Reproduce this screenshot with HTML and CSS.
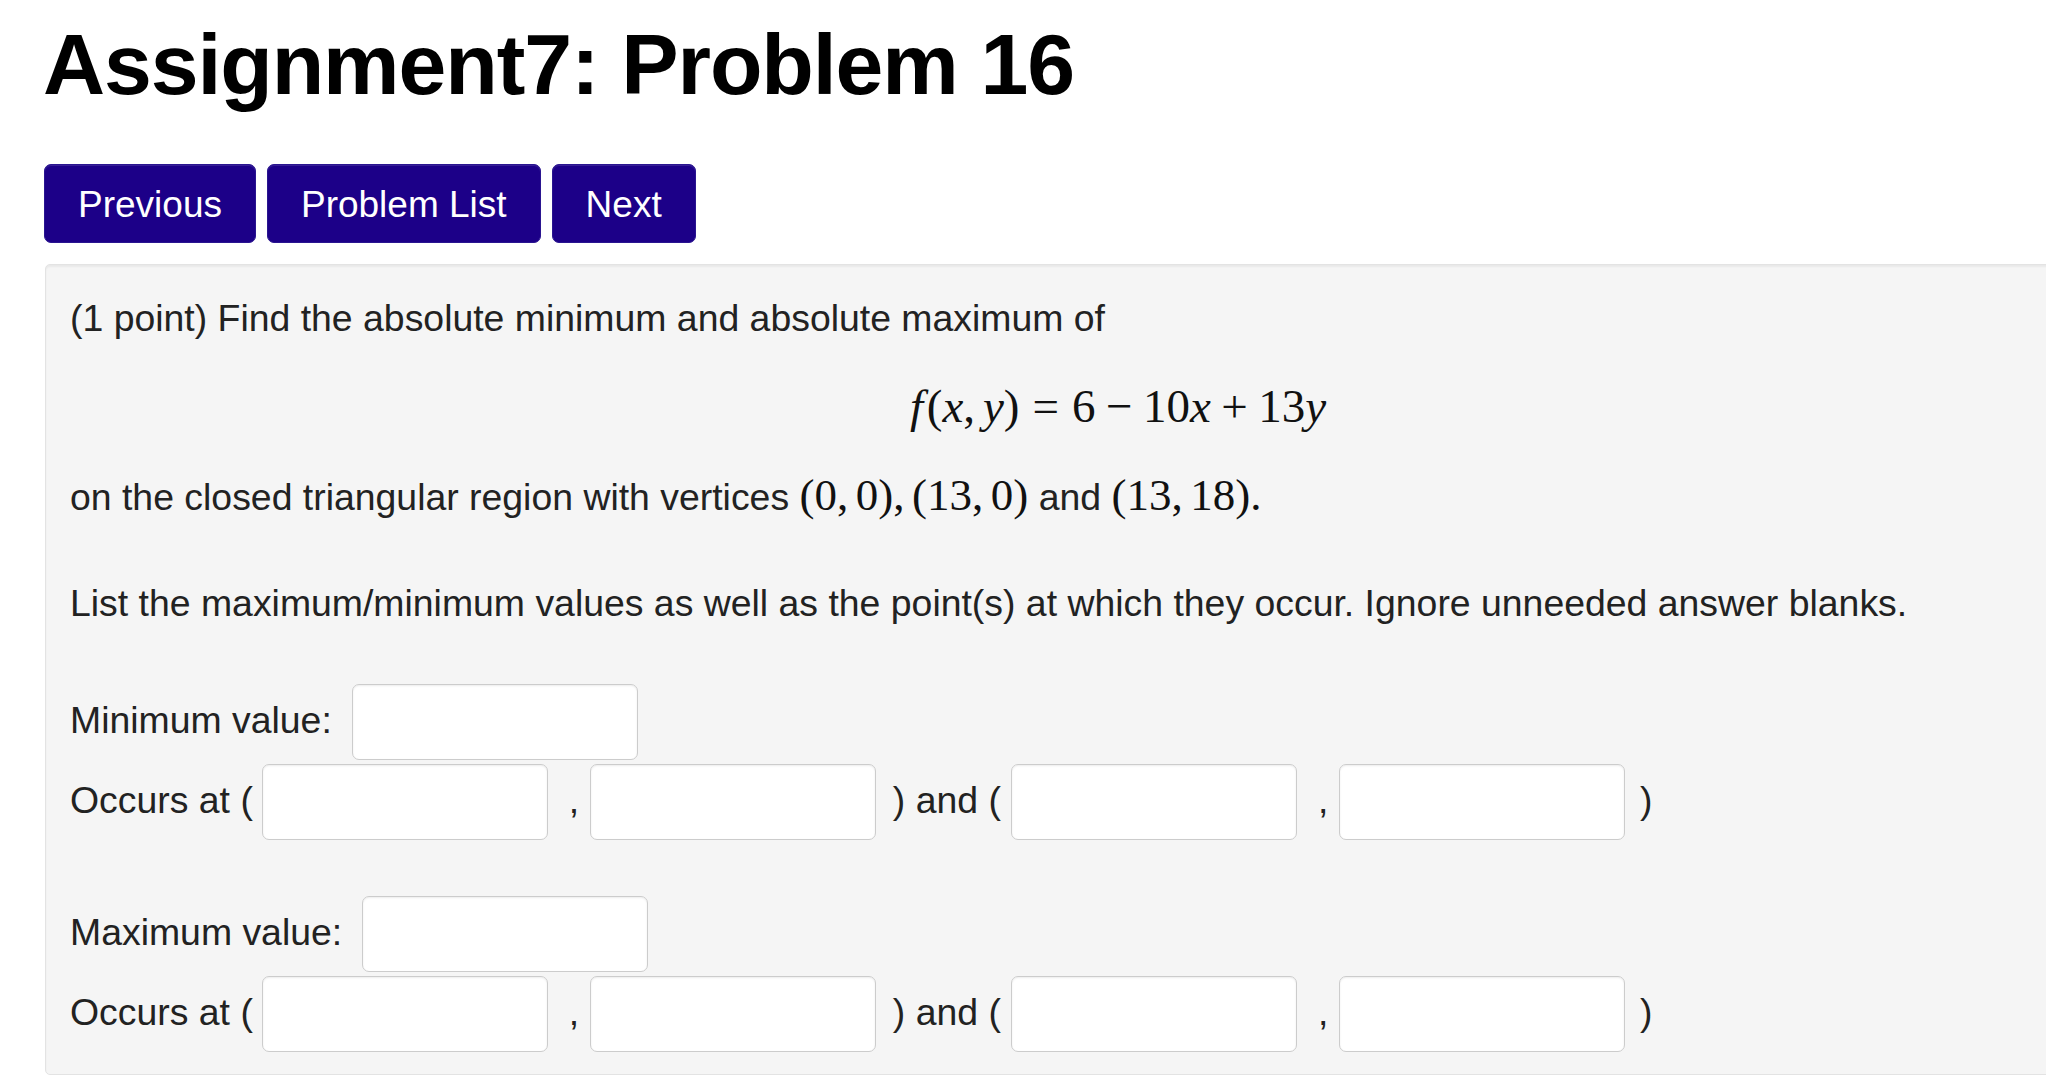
FILE: index.html
```html
<!DOCTYPE html>
<html>
<head>
<meta charset="utf-8">
<title>Assignment7: Problem 16</title>
<link rel="stylesheet" href="styles.css">
</head>
<body>
<div class="page">
  <h1 class="title">Assignment7: Problem 16</h1>
  <div class="nav">
    <a class="btn">Previous</a>
    <a class="btn">Problem List</a>
    <a class="btn">Next</a>
  </div>
  <div class="well">
    <p class="line l1">(1 point) Find the absolute minimum and absolute maximum of</p>
    <div class="formula"><span class="mi mi-f">f</span>(<span class="mi">x</span>,<span class="thin"></span><span class="mi">y</span>)<span class="rel">=</span>6<span class="bin">−</span>10<span class="mi">x</span><span class="bin">+</span>13<span class="mi">y</span></div>
    <p class="line l3">on the closed triangular region with vertices <span class="m">(0,<span class="thin"></span>0),<span class="thin"></span>(13,<span class="thin"></span>0)</span> and <span class="m">(13,<span class="thin"></span>18).</span></p>
    <p class="line l4">List the maximum/minimum values as well as the point(s) at which they occur. Ignore unneeded answer blanks.</p>

    <div class="row row-val">
      <span class="txt">Minimum value:</span>
      <input class="ans ans-val" type="text">
    </div>
    <div class="row row-at">
      <span class="txt">Occurs at (</span>
      <input class="ans ans-first" type="text">
      <span class="txt comma">,</span>
      <input class="ans" type="text">
      <span class="txt and">) and (</span>
      <input class="ans" type="text">
      <span class="txt comma">,</span>
      <input class="ans" type="text">
      <span class="txt close">)</span>
    </div>

    <div class="row row-val row-gap">
      <span class="txt">Maximum value:</span>
      <input class="ans ans-val" type="text">
    </div>
    <div class="row row-at">
      <span class="txt">Occurs at (</span>
      <input class="ans ans-first" type="text">
      <span class="txt comma">,</span>
      <input class="ans" type="text">
      <span class="txt and">) and (</span>
      <input class="ans" type="text">
      <span class="txt comma">,</span>
      <input class="ans" type="text">
      <span class="txt close">)</span>
    </div>
  </div>
</div>
</body>
</html>
```
FILE: styles.css
```css
html, body {
  margin: 0;
  padding: 0;
  background: #ffffff;
  overflow: hidden;
}

body {
  font-family: "Liberation Sans", Arial, Helvetica, sans-serif;
  color: #222222;
}

.page {
  padding: 14px 0 0 44px;
}

.title {
  margin: 0;
  font-size: 86px;
  line-height: 100px;
  font-weight: bold;
  letter-spacing: -1.1px;
  color: #000000;
  margin-left: -1px;
}

.nav {
  display: flex;
  gap: 11px;
  margin-top: 50px;
}

.btn {
  display: block;
  height: 79px;
  line-height: 79px;
  box-sizing: border-box;
  padding: 0 33px;
  background: #1c0088;
  border: 1px solid #2a1590;
  border-radius: 7px;
  color: #ffffff;
  font-size: 37px;
  text-decoration: none;
  box-shadow: inset 0 1px 0 rgba(255, 255, 255, 0.12);
}

.well {
  width: 2146px;
  box-sizing: border-box;
  margin-top: 21px;
  margin-left: 1px;
  padding: 28px 24px 22px 24px;
  background: #f5f5f5;
  border: 1px solid #e3e3e3;
  border-radius: 5px;
  box-shadow: inset 0 2px 2px rgba(0, 0, 0, 0.05);
  font-size: 37.4px;
  line-height: 50px;
}

.line {
  margin: 0;
}

.formula {
  margin-top: 33px;
  text-align: center;
  font-family: "Liberation Serif", "Times New Roman", serif;
  font-size: 47px;
  line-height: 60px;
  color: #111111;
}

.mi {
  font-style: italic;
}

.mi-f {
  margin-right: 0.08em;
}

.thin {
  display: inline-block;
  width: 0.167em;
}

.rel {
  margin: 0 0.278em;
}

.bin {
  margin: 0 0.222em;
}

.l3 {
  margin-top: 36px;
}

.m {
  font-family: "Liberation Serif", "Times New Roman", serif;
  font-size: 45px;
  line-height: 0;
  color: #111111;
}

.l4 {
  margin-top: 56px;
}

.row {
  display: flex;
  align-items: center;
  height: 76px;
}

.row-val {
  margin-top: 56px;
}

.row-at {
  margin-top: 4px;
}

.txt {
  display: block;
  padding-bottom: 5px;
  white-space: pre;
}

.ans {
  display: block;
  width: 286px;
  height: 76px;
  box-sizing: border-box;
  margin: 0;
  padding: 4px 10px;
  background: #ffffff;
  border: 1px solid #cccccc;
  border-radius: 7px;
  box-shadow: inset 0 1px 2px rgba(0, 0, 0, 0.08);
  font-family: "Liberation Sans", Arial, sans-serif;
  font-size: 30px;
}

.ans-val {
  margin-left: 20px;
}

.ans-first {
  margin-left: 9px;
}

.comma {
  width: 42px;
  box-sizing: border-box;
  padding-left: 21px;
}

.and {
  margin-left: 17px;
  margin-right: 10px;
}

.close {
  margin-left: 15px;
}
```
